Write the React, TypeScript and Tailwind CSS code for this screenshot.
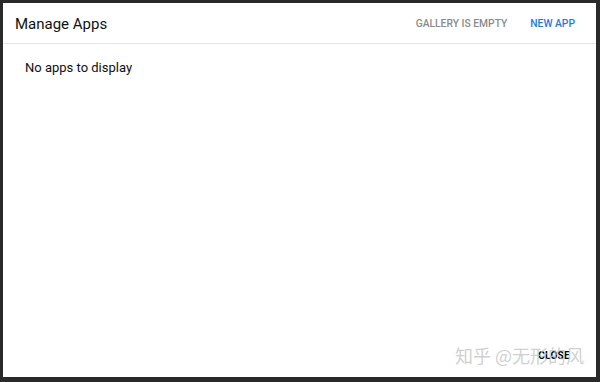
import React from 'react';

export default function App() {
  return (
    <div className="w-[600px] h-[382px] bg-[#2a2a2a] pt-[3px] pl-[3px] pr-[4px] pb-[5px] font-['Roboto','Liberation_Sans',sans-serif]">
      <div className="relative w-full h-full bg-white flex flex-col">
        {/* Header */}
        <div className="h-[41px] flex items-center justify-between pt-[2px] pl-[12px] pr-[21px] border-b border-[#e6e6e6]">
          <h1 className="text-[15px] text-[#111] font-normal">Manage Apps</h1>
          <div className="flex items-center gap-[23px] text-[10.3px] font-medium">
            <span className="text-[#8a8a8a]">GALLERY IS EMPTY</span>
            <button className="text-[#1b7ae0] font-medium">NEW APP</button>
          </div>
        </div>

        {/* Body */}
        <div className="flex-1 pl-[22px] pt-[14px]">
          <p className="text-[13px] text-[#111]">No apps to display</p>
        </div>

        {/* Footer */}
        <div className="flex justify-end pr-[26px] pb-[14px]">
          <button className="text-[10px] font-bold text-black tracking-[0.3px]">CLOSE</button>
        </div>

        {/* Watermark */}
        <div className="absolute left-[452px] top-[339px] text-[18px] text-[#c4c4c4]/80 font-['Noto_Sans_CJK_SC',sans-serif] pointer-events-none whitespace-nowrap">
          知乎 @无形的风
        </div>
      </div>
    </div>
  );
}
